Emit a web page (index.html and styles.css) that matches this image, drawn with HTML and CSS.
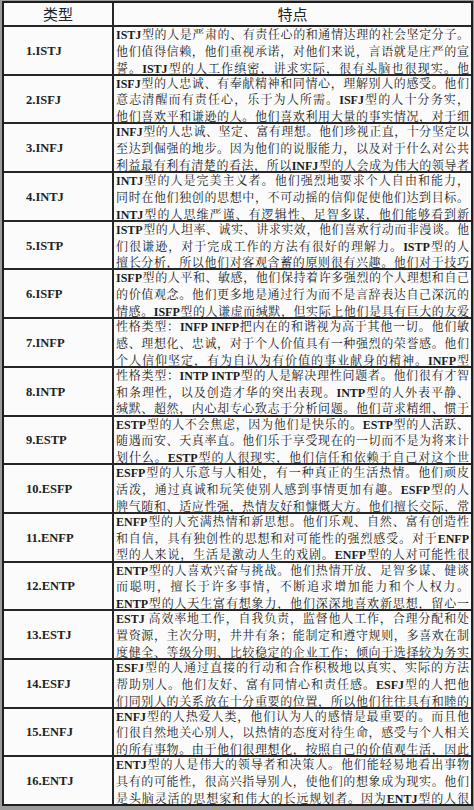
FILE: index.html
```html
<!DOCTYPE html>
<html lang="zh-CN">
<head>
<meta charset="utf-8">
<title>MBTI 类型特点</title>
<link rel="stylesheet" href="styles.css">
</head>
<body>
<div class="sheet">
  <div class="row head">
    <div class="type h">类型</div>
    <div class="desc h">特点</div>
  </div>

  <div class="row"><div class="type">1.ISTJ</div><div class="desc">
    <div class="ln"><b>ISTJ</b>型的人是严肃的、有责任心的和通情达理的社会坚定分子。</div>
    <div class="ln">他们值得信赖，他们重视承诺，对他们来说，言语就是庄严的宣</div>
    <div class="ln">誓。<b>ISTJ</b>型的人工作缜密，讲求实际，很有头脑也很现实。他</div>
  </div></div>

  <div class="row"><div class="type">2.ISFJ</div><div class="desc">
    <div class="ln"><b>ISFJ</b>型的人忠诚、有奉献精神和同情心，理解别人的感受。他们</div>
    <div class="ln">意志清醒而有责任心，乐于为人所需。<b>ISFJ</b>型的人十分务实，</div>
    <div class="ln">他们喜欢平和谦逊的人。他们喜欢利用大量的事实情况，对于细</div>
  </div></div>

  <div class="row"><div class="type">3.INFJ</div><div class="desc">
    <div class="ln"><b>INFJ</b>型的人忠诚、坚定、富有理想。他们珍视正直，十分坚定以</div>
    <div class="ln">至达到倔强的地步。因为他们的说服能力，以及对于什么对公共</div>
    <div class="ln">利益最有利有清楚的看法，所以<b>INFJ</b>型的人会成为伟大的领导者</div>
  </div></div>

  <div class="row"><div class="type">4.INTJ</div><div class="desc">
    <div class="ln"><b>INTJ</b>型的人是完美主义者。他们强烈地要求个人自由和能力，</div>
    <div class="ln">同时在他们独创的思想中，不可动摇的信仰促使他们达到目标。</div>
    <div class="ln"><b>INTJ</b>型的人思维严谨、有逻辑性、足智多谋，他们能够看到新</div>
  </div></div>

  <div class="row"><div class="type">5.ISTP</div><div class="desc">
    <div class="ln"><b>ISTP</b>型的人坦率、诚实、讲求实效，他们喜欢行动而非漫谈。他</div>
    <div class="ln">们很谦逊，对于完成工作的方法有很好的理解力。<b>ISTP</b>型的人</div>
    <div class="ln">擅长分析，所以他们对客观含蓄的原则很有兴趣。他们对于技巧</div>
  </div></div>

  <div class="row"><div class="type">6.ISFP</div><div class="desc">
    <div class="ln"><b>ISFP</b>型的人平和、敏感，他们保持着许多强烈的个人理想和自己</div>
    <div class="ln">的价值观念。他们更多地是通过行为而不是言辞表达自己深沉的</div>
    <div class="ln">情感。<b>ISFP</b>型的人谦虚而缄默，但实际上他们是具有巨大的友爱</div>
  </div></div>

  <div class="row"><div class="type">7.INFP</div><div class="desc">
    <div class="ln">性格类型：<b>INFP INFP</b>把内在的和谐视为高于其他一切。他们敏</div>
    <div class="ln">感、理想化、忠诚，对于个人价值具有一种强烈的荣誉感。他们</div>
    <div class="ln">个人信仰坚定，有为自认为有价值的事业献身的精神。<b>INFP</b>型</div>
  </div></div>

  <div class="row"><div class="type">8.INTP</div><div class="desc">
    <div class="ln">性格类型：<b>INTP INTP</b>型的人是解决理性问题者。他们很有才智</div>
    <div class="ln">和条理性，以及创造才华的突出表现。<b>INTP</b>型的人外表平静、</div>
    <div class="ln">缄默、超然，内心却专心致志于分析问题。他们苛求精细、惯于</div>
  </div></div>

  <div class="row"><div class="type">9.ESTP</div><div class="desc">
    <div class="ln"><b>ESTP</b>型的人不会焦虑，因为他们是快乐的。<b>ESTP</b>型的人活跃、</div>
    <div class="ln">随遇而安、天真率直。他们乐于享受现在的一切而不是为将来计</div>
    <div class="ln">划什么。<b>ESTP</b>型的人很现实，他们信任和依赖于自己对这个世</div>
  </div></div>

  <div class="row"><div class="type">10.ESFP</div><div class="desc">
    <div class="ln"><b>ESFP</b>型的人乐意与人相处，有一种真正的生活热情。他们顽皮</div>
    <div class="ln">活泼，通过真诚和玩笑使别人感到事情更加有趣。<b>ESFP</b>型的人</div>
    <div class="ln">脾气随和、适应性强，热情友好和慷慨大方。他们擅长交际，常</div>
  </div></div>

  <div class="row"><div class="type">11.ENFP</div><div class="desc">
    <div class="ln"><b>ENFP</b>型的人充满热情和新思想。他们乐观、自然、富有创造性</div>
    <div class="ln">和自信，具有独创性的思想和对可能性的强烈感受。对于<b>ENFP</b></div>
    <div class="ln">型的人来说，生活是激动人生的戏剧。<b>ENFP</b>型的人对可能性很</div>
  </div></div>

  <div class="row"><div class="type">12.ENTP</div><div class="desc">
    <div class="ln"><b>ENTP</b>型的人喜欢兴奋与挑战。他们热情开放、足智多谋、健谈</div>
    <div class="ln">而聪明，擅长于许多事情，不断追求增加能力和个人权力。</div>
    <div class="ln"><b>ENTP</b>型的人天生富有想象力，他们深深地喜欢新思想，留心一</div>
  </div></div>

  <div class="row"><div class="type">13.ESTJ</div><div class="desc">
    <div class="ln"><b>ESTJ</b> 高效率地工作，自我负责，监督他人工作，合理分配和处</div>
    <div class="ln">置资源，主次分明，井井有条；能制定和遵守规则，多喜欢在制</div>
    <div class="ln">度健全、等级分明、比较稳定的企业工作；倾向于选择较为务实</div>
  </div></div>

  <div class="row"><div class="type">14.ESFJ</div><div class="desc">
    <div class="ln"><b>ESFJ</b>型的人通过直接的行动和合作积极地以真实、实际的方法</div>
    <div class="ln">帮助别人。他们友好、富有同情心和责任感。<b>ESFJ</b>型的人把他</div>
    <div class="ln">们同别人的关系放在十分重要的位置，所以他们往往具有和睦的</div>
  </div></div>

  <div class="row"><div class="type">15.ENFJ</div><div class="desc">
    <div class="ln"><b>ENFJ</b>型的人热爱人类，他们认为人的感情是最重要的。而且他</div>
    <div class="ln">们很自然地关心别人，以热情的态度对待生命，感受与个人相关</div>
    <div class="ln">的所有事物。由于他们很理想化，按照自己的价值观生活，因此</div>
  </div></div>

  <div class="row"><div class="type">16.ENTJ</div><div class="desc">
    <div class="ln"><b>ENTJ</b>型的人是伟大的领导者和决策人。他们能轻易地看出事物</div>
    <div class="ln">具有的可能性，很高兴指导别人，使他们的想象成为现实。他们</div>
    <div class="ln">是头脑灵活的思想家和伟大的长远规划者。因为<b>ENTJ</b>型的人很</div>
  </div></div>
</div>
</body>
</html>
```

FILE: styles.css
```css
html, body {
  margin: 0;
  padding: 0;
  background: #9c9c9c;
}

body {
  width: 474px;
  height: 810px;
  overflow: hidden;
  color: #1c1c1c;
  font-family: "Liberation Serif", "Noto Serif CJK SC", "Noto Sans CJK SC", serif;
}

.sheet {
  margin: 1px 1px 0 2px;
  border: 2px solid #1e1e1e;
  background: #fbfbfb;
}

.row {
  display: grid;
  grid-template-columns: 110px 1fr;
  height: 46.7px;
  border-top: 2px solid #262626;
  overflow: hidden;
}

.row.head {
  height: 22px;
  border-top: 0;
}

.type {
  border-right: 2px solid #262626;
  display: flex;
  align-items: center;
  padding-left: 22px;
  padding-top: 2px;
  font-weight: bold;
  font-size: 12.5px;
  color: #222;
}

.desc {
  padding: 0 2px 0 2px;
  overflow: hidden;
  font-size: 12px;
}

.ln {
  height: 16.8px;
  line-height: 16.8px;
  overflow: hidden;
  text-align: justify;
  text-align-last: justify;
  text-justify: inter-character;
}

.ln b {
  font-weight: bold;
}

.h {
  font-family: "Noto Sans CJK SC", sans-serif;
  font-weight: 400;
  font-size: 15px;
  justify-content: center;
  padding: 0;
  text-align: center;
  line-height: 22px;
  color: #222;
}
```
